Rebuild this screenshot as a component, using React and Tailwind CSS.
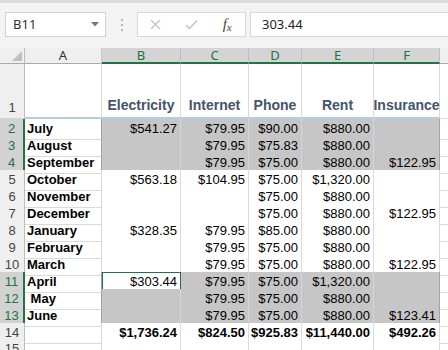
import React from "react";

const GRID = "grid grid-cols-[25px_77px_79px_68px_53px_72px_66px_1fr]";

const HEADERS = ["Electricity", "Internet", "Phone", "Rent", "Insurance"];

const ROWS = [
  { n: 2, label: "July", v: ["$541.27", "$79.95", "$90.00", "$880.00", ""] },
  { n: 3, label: "August", v: ["", "$79.95", "$75.83", "$880.00", ""] },
  { n: 4, label: "September", v: ["", "$79.95", "$75.00", "$880.00", "$122.95"] },
  { n: 5, label: "October", v: ["$563.18", "$104.95", "$75.00", "$1,320.00", ""] },
  { n: 6, label: "November", v: ["", "", "$75.00", "$880.00", ""] },
  { n: 7, label: "December", v: ["", "", "$75.00", "$880.00", "$122.95"] },
  { n: 8, label: "January", v: ["$328.35", "$79.95", "$85.00", "$880.00", ""] },
  { n: 9, label: "February", v: ["", "$79.95", "$75.00", "$880.00", ""] },
  { n: 10, label: "March", v: ["", "$79.95", "$75.00", "$880.00", "$122.95"] },
  { n: 11, label: "April", v: ["$303.44", "$79.95", "$75.00", "$1,320.00", ""] },
  { n: 12, label: "\u00a0May", v: ["", "$79.95", "$75.00", "$880.00", ""] },
  { n: 13, label: "June", v: ["", "$79.95", "$75.00", "$880.00", "$123.41"] },
  { n: 14, label: "", v: ["$1,736.24", "$824.50", "$925.83", "$11,440.00", "$492.26"], bold: true },
  { n: 15, label: "", v: ["", "", "", "", ""] },
];

// B2:F4 and B11:F13 are selected, B11 is the active cell
const SELECTED = new Set([2, 3, 4, 11, 12, 13]);
const ACTIVE = { row: 11, col: 0 };

function RowHeader({ n, selected, tall }) {
  return (
    <div
      className={`flex justify-center border-b text-[13px] leading-none ${
        tall ? "items-end pb-[4px]" : "items-center"
      } ${
        selected
          ? "bg-[#d2d2d2] text-[#217346] border-b-[#bdbdbd] border-r-2 border-r-[#217346]"
          : "bg-[#efefef] text-[#444] border-b-[#d4d4d4] border-r border-r-[#bdbdbd]"
      }`}
    >
      {n}
    </div>
  );
}

function ValueCell({ value, row, col, bold }) {
  const selected = SELECTED.has(row);
  const active = row === ACTIVE.row && col === ACTIVE.col;
  const lastCol = col === 4;
  const lastSelRow = selected && !SELECTED.has(row + 1);
  const aboveSel = !selected && SELECTED.has(row + 1);

  let tone;
  if (active) {
    tone = "bg-white border-r-[#217346] border-b-[#217346] shadow-[inset_1px_1px_0_#217346]";
  } else if (selected) {
    tone = `bg-[#c6c6c6] ${lastCol ? "border-r-[#a3a3a3]" : "border-r-[#d6d6d6]"} ${
      lastSelRow ? "border-b-[#a3a3a3]" : "border-b-[#d6d6d6]"
    }`;
  } else {
    tone = `bg-white border-r-[#dadada] ${aboveSel ? "border-b-[#a3a3a3]" : "border-b-[#dadada]"}`;
  }

  return (
    <div
      className={`flex items-center justify-end whitespace-nowrap border-r border-b pr-[3px] ${tone} ${
        bold ? "font-bold" : ""
      }`}
    >
      {value}
    </div>
  );
}

function FormulaBar() {
  return (
    <div className="flex h-[48px] items-start border-t-[3px] border-t-[#dcdcdc] bg-[#f3f3f3] pl-[5px] pt-[9px] font-['Noto_Sans',sans-serif]">
      {/* name box */}
      <div className="flex h-[25px] w-[101px] items-center justify-between border border-[#d0d0d0] bg-white pl-[7px] pr-[6px]">
        <span className="text-[13px] text-[#333]">B11</span>
        <svg width="8" height="5" viewBox="0 0 8 5">
          <path d="M0 0 L8 0 L4 4.5 Z" fill="#777" />
        </svg>
      </div>

      {/* grip dots */}
      <div className="flex h-[25px] w-[31px] flex-col items-center justify-center gap-[3px]">
        <span className="h-[2px] w-[2px] bg-[#b5b5b5]" />
        <span className="h-[2px] w-[2px] bg-[#b5b5b5]" />
        <span className="h-[2px] w-[2px] bg-[#b5b5b5]" />
      </div>

      {/* cancel / enter / insert function */}
      <div className="flex h-[25px] w-[109px] items-center border border-[#d8d8d8] bg-white">
        <span className="flex w-[36px] justify-center">
          <svg width="11" height="11" viewBox="0 0 11 11">
            <path d="M1 1 L10 10 M10 1 L1 10" stroke="#c2c2c2" strokeWidth="1.3" />
          </svg>
        </span>
        <span className="flex w-[36px] justify-center">
          <svg width="13" height="11" viewBox="0 0 13 11">
            <path d="M1 6 L4.5 9.5 L12 1.5" stroke="#c2c2c2" strokeWidth="1.4" fill="none" />
          </svg>
        </span>
        <span className="flex w-[36px] items-end justify-center font-['Liberation_Serif',serif] text-[15px] italic leading-none text-[#444]">
          f<span className="mb-[-1px] text-[11px]">x</span>
        </span>
      </div>

      {/* formula input */}
      <div className="ml-[4px] flex h-[25px] flex-1 items-center border border-[#d8d8d8] border-r-0 bg-white pl-[11px]">
        <span className="text-[13px] text-[#222]">303.44</span>
      </div>
    </div>
  );
}

function ColumnHeaders() {
  const letters = ["A", "B", "C", "D", "E", "F"];
  return (
    <div className={`${GRID} h-[16px] font-['Noto_Sans',sans-serif] text-[13px] leading-none`}>
      <div className="relative border-r border-b border-r-[#bdbdbd] border-b-[#a9a9a9] bg-[#efefef]">
        <svg className="absolute bottom-[2px] right-[2px]" width="10" height="10" viewBox="0 0 10 10">
          <path d="M10 0 L10 10 L0 10 Z" fill="#bfbfbf" />
        </svg>
      </div>
      {letters.map((l) =>
        l === "A" ? (
          <div
            key={l}
            className="flex items-center justify-center border-r border-b border-r-[#cbcbcb] border-b-[#a9a9a9] bg-[#efefef] text-[#333]"
          >
            {l}
          </div>
        ) : (
          <div
            key={l}
            className="flex items-center justify-center border-r border-b-2 border-r-[#bdbdbd] border-b-[#217346] bg-[#d4d4d4] pt-[1px] text-[#217346]"
          >
            {l}
          </div>
        )
      )}
      <div className="border-b border-b-[#a9a9a9] bg-[#efefef]" />
    </div>
  );
}

export default function App() {
  return (
    <div className="h-[350px] w-[448px] overflow-hidden bg-white font-['Liberation_Sans',Arial,sans-serif] text-[13px] text-black">
      <FormulaBar />
      <ColumnHeaders />

      {/* row 1: headings */}
      <div className={`${GRID} h-[55px]`}>
        <RowHeader n={1} tall />
        <div className="border-r border-b-2 border-r-[#dadada] border-b-[#b4cbe9]" />
        {HEADERS.map((h) => (
          <div
            key={h}
            className="flex items-end justify-center whitespace-nowrap border-r border-b-2 border-r-[#dadada] border-b-[#b4cbe9] pb-[1px] text-[14px] font-bold text-[#44546a]"
          >
            {h}
          </div>
        ))}
        <div className="border-b border-b-[#dadada]" />
      </div>

      {ROWS.map((r) => {
        const selected = SELECTED.has(r.n);
        return (
          <div key={r.n} className={`${GRID} h-[17px]`}>
            <RowHeader n={r.n} selected={selected} />
            <div
              className={`flex items-center whitespace-pre border-r border-b border-b-[#dadada] pl-[2px] font-bold ${
                selected ? "border-r-[#a3a3a3]" : "border-r-[#dadada]"
              }`}
            >
              {r.label}
            </div>
            {r.v.map((val, i) => (
              <ValueCell key={i} value={val} row={r.n} col={i} bold={r.bold} />
            ))}
            <div className="border-b border-b-[#dadada]" />
          </div>
        );
      })}
    </div>
  );
}
